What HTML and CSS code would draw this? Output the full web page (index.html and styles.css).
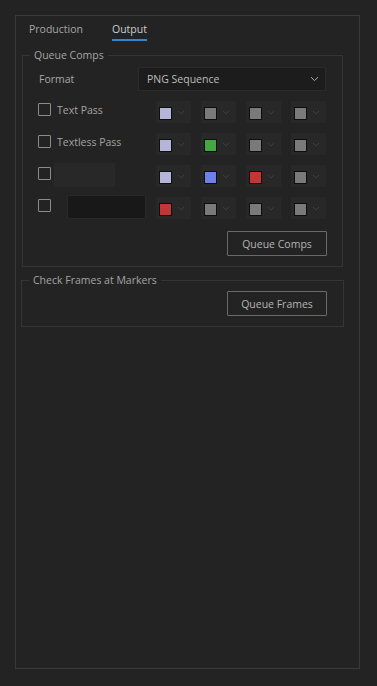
FILE: index.html
```html
<!DOCTYPE html>
<html>
<head>
<meta charset="utf-8">
<link rel="stylesheet" href="styles.css">
</head>
<body>
<div class="panel">
  <div class="tabs">
    <div class="tab">Production</div>
    <div class="tab active">Output</div>
  </div>

  <fieldset class="group group-comps">
    <legend>Queue Comps</legend>
    <div class="format-row">
      <span class="format-label">Format</span>
      <div class="select">
        <span>PNG Sequence</span>
        <svg class="chev" width="9" height="6" viewBox="0 0 9 6"><path d="M1 1.2 L4.5 4.6 L8 1.2" fill="none" stroke="#b0b0b0" stroke-width="1"/></svg>
      </div>
    </div>

    <div class="pass-grid">
      <div class="pass-left"><span class="cb"></span><span class="pass-label">Text Pass</span></div>
      <div class="cell"><span class="sw lav"></span><svg class="schev" width="8" height="5" viewBox="0 0 8 5"><path d="M1 1 L4 4 L7 1" fill="none" stroke="#3e3e3e" stroke-width="1"/></svg></div>
      <div class="cell"><span class="sw gry"></span><svg class="schev" width="8" height="5" viewBox="0 0 8 5"><path d="M1 1 L4 4 L7 1" fill="none" stroke="#3e3e3e" stroke-width="1"/></svg></div>
      <div class="cell"><span class="sw gry"></span><svg class="schev" width="8" height="5" viewBox="0 0 8 5"><path d="M1 1 L4 4 L7 1" fill="none" stroke="#3e3e3e" stroke-width="1"/></svg></div>
      <div class="cell"><span class="sw gry"></span><svg class="schev" width="8" height="5" viewBox="0 0 8 5"><path d="M1 1 L4 4 L7 1" fill="none" stroke="#3e3e3e" stroke-width="1"/></svg></div>

      <div class="pass-left"><span class="cb"></span><span class="pass-label">Textless Pass</span></div>
      <div class="cell"><span class="sw lav"></span><svg class="schev" width="8" height="5" viewBox="0 0 8 5"><path d="M1 1 L4 4 L7 1" fill="none" stroke="#3e3e3e" stroke-width="1"/></svg></div>
      <div class="cell"><span class="sw grn"></span><svg class="schev" width="8" height="5" viewBox="0 0 8 5"><path d="M1 1 L4 4 L7 1" fill="none" stroke="#3e3e3e" stroke-width="1"/></svg></div>
      <div class="cell"><span class="sw gry"></span><svg class="schev" width="8" height="5" viewBox="0 0 8 5"><path d="M1 1 L4 4 L7 1" fill="none" stroke="#3e3e3e" stroke-width="1"/></svg></div>
      <div class="cell"><span class="sw gry"></span><svg class="schev" width="8" height="5" viewBox="0 0 8 5"><path d="M1 1 L4 4 L7 1" fill="none" stroke="#3e3e3e" stroke-width="1"/></svg></div>

      <div class="pass-left"><span class="cb"></span><span class="field-ghost"></span></div>
      <div class="cell"><span class="sw lav"></span><svg class="schev" width="8" height="5" viewBox="0 0 8 5"><path d="M1 1 L4 4 L7 1" fill="none" stroke="#3e3e3e" stroke-width="1"/></svg></div>
      <div class="cell"><span class="sw blu"></span><svg class="schev" width="8" height="5" viewBox="0 0 8 5"><path d="M1 1 L4 4 L7 1" fill="none" stroke="#3e3e3e" stroke-width="1"/></svg></div>
      <div class="cell"><span class="sw red"></span><svg class="schev" width="8" height="5" viewBox="0 0 8 5"><path d="M1 1 L4 4 L7 1" fill="none" stroke="#3e3e3e" stroke-width="1"/></svg></div>
      <div class="cell"><span class="sw gry"></span><svg class="schev" width="8" height="5" viewBox="0 0 8 5"><path d="M1 1 L4 4 L7 1" fill="none" stroke="#3e3e3e" stroke-width="1"/></svg></div>

      <div class="pass-left"><span class="cb"></span><span class="field-dark"></span></div>
      <div class="cell"><span class="sw red"></span><svg class="schev" width="8" height="5" viewBox="0 0 8 5"><path d="M1 1 L4 4 L7 1" fill="none" stroke="#3e3e3e" stroke-width="1"/></svg></div>
      <div class="cell"><span class="sw gry"></span><svg class="schev" width="8" height="5" viewBox="0 0 8 5"><path d="M1 1 L4 4 L7 1" fill="none" stroke="#3e3e3e" stroke-width="1"/></svg></div>
      <div class="cell"><span class="sw gry"></span><svg class="schev" width="8" height="5" viewBox="0 0 8 5"><path d="M1 1 L4 4 L7 1" fill="none" stroke="#3e3e3e" stroke-width="1"/></svg></div>
      <div class="cell"><span class="sw gry"></span><svg class="schev" width="8" height="5" viewBox="0 0 8 5"><path d="M1 1 L4 4 L7 1" fill="none" stroke="#3e3e3e" stroke-width="1"/></svg></div>
    </div>

    <div class="btn-row">
      <button class="btn">Queue Comps</button>
    </div>
  </fieldset>

  <fieldset class="group group-frames">
    <legend>Check Frames at Markers</legend>
    <div class="btn-row">
      <button class="btn">Queue Frames</button>
    </div>
  </fieldset>
</div>
</body>
</html>
```

FILE: styles.css
```css
html, body {
  margin: 0;
  padding: 0;
  background: #232323;
}

body {
  font-family: "Open Sans", "Noto Sans", sans-serif;
  font-size: 10.5px;
  color: #a9a9a9;
}

.panel {
  margin: 15px 0 0 15px;
  width: 345px;
  height: 654px;
  border: 1px solid #3a3a3a;
  box-sizing: border-box;
}

.tabs {
  display: flex;
  padding-left: 13px;
}

.tab {
  padding: 6px 0 2px;
  line-height: 15px;
  border-bottom: 2px solid transparent;
  margin-right: 29px;
  color: #a6a6a6;
}

.tab.active {
  color: #cdcdcd;
  border-bottom-color: #2f86d8;
}

.group {
  margin: 0;
  border: 1px solid #353535;
  padding: 0;
  min-width: 0;
}

.group legend {
  line-height: 15px;
  padding: 0 4px;
  color: #a4a4a4;
  margin-left: -9px;
}

.group-comps {
  margin: 7px 0 0 6px;
  width: 321px;
  box-sizing: border-box;
  padding: 3px 15px 10px 16px;
}

.format-row {
  display: flex;
  align-items: center;
  height: 24px;
  margin-top: 1px;
}

.format-label {
  width: 99px;
  color: #a9a9a9;
}

.select {
  width: 188px;
  height: 24px;
  box-sizing: border-box;
  background: #1c1c1c;
  border: 1px solid #2b2b2b;
  display: flex;
  align-items: center;
  justify-content: space-between;
  padding: 0 6px 0 8px;
  color: #bdbdbd;
}

.pass-grid {
  margin-top: 10px;
  margin-left: -1px;
  display: grid;
  grid-template-columns: 108px repeat(4, 35px);
  column-gap: 10px;
  row-gap: 10px;
  grid-auto-rows: 22px;
}

.pass-left {
  display: flex;
  align-items: center;
  padding-bottom: 5px;
}

.cb {
  width: 13px;
  height: 13px;
  box-sizing: border-box;
  border: 1.5px solid #8c8c8c;
  border-radius: 1px;
  flex: none;
}

.pass-label {
  margin-left: 6px;
  color: #a4a4a4;
  white-space: nowrap;
}

.field-ghost {
  margin-left: 3px;
  width: 61px;
  height: 24px;
  background: #282828;
  flex: none;
  margin-top: 2px;
}

.field-dark {
  margin-left: 16px;
  width: 79px;
  height: 24px;
  box-sizing: border-box;
  background: #181818;
  border: 1px solid #2a2a2a;
  border-radius: 2px;
  flex: none;
  margin-top: 3px;
}

.cell {
  background: #282828;
  display: flex;
  align-items: center;
  padding-left: 3px;
  padding-top: 2px;
  box-sizing: border-box;
}

.sw {
  width: 13px;
  height: 13px;
  box-sizing: border-box;
  border: 1px solid #0e0e0e;
  flex: none;
}

.schev {
  margin-left: 5px;
  margin-top: -2px;
}

.lav { background: #b5b5d9; }
.gry { background: #7a7a7a; }
.grn { background: #43a843; }
.blu { background: #6d81e6; }
.red { background: #c43535; }

.btn-row {
  display: flex;
  justify-content: flex-end;
}

.group-comps .btn-row {
  margin-top: 12px;
}

.btn {
  width: 100px;
  height: 25px;
  box-sizing: border-box;
  background: #232323;
  border: 1px solid #696969;
  border-radius: 1px;
  color: #b4b4b4;
  font-family: "Open Sans", "Noto Sans", sans-serif;
  font-size: 10.5px;
  padding: 0;
}

.group-frames {
  margin: 6px 0 0 5px;
  width: 323px;
  box-sizing: border-box;
  padding: 3px 16px 10px 16px;
}
```
